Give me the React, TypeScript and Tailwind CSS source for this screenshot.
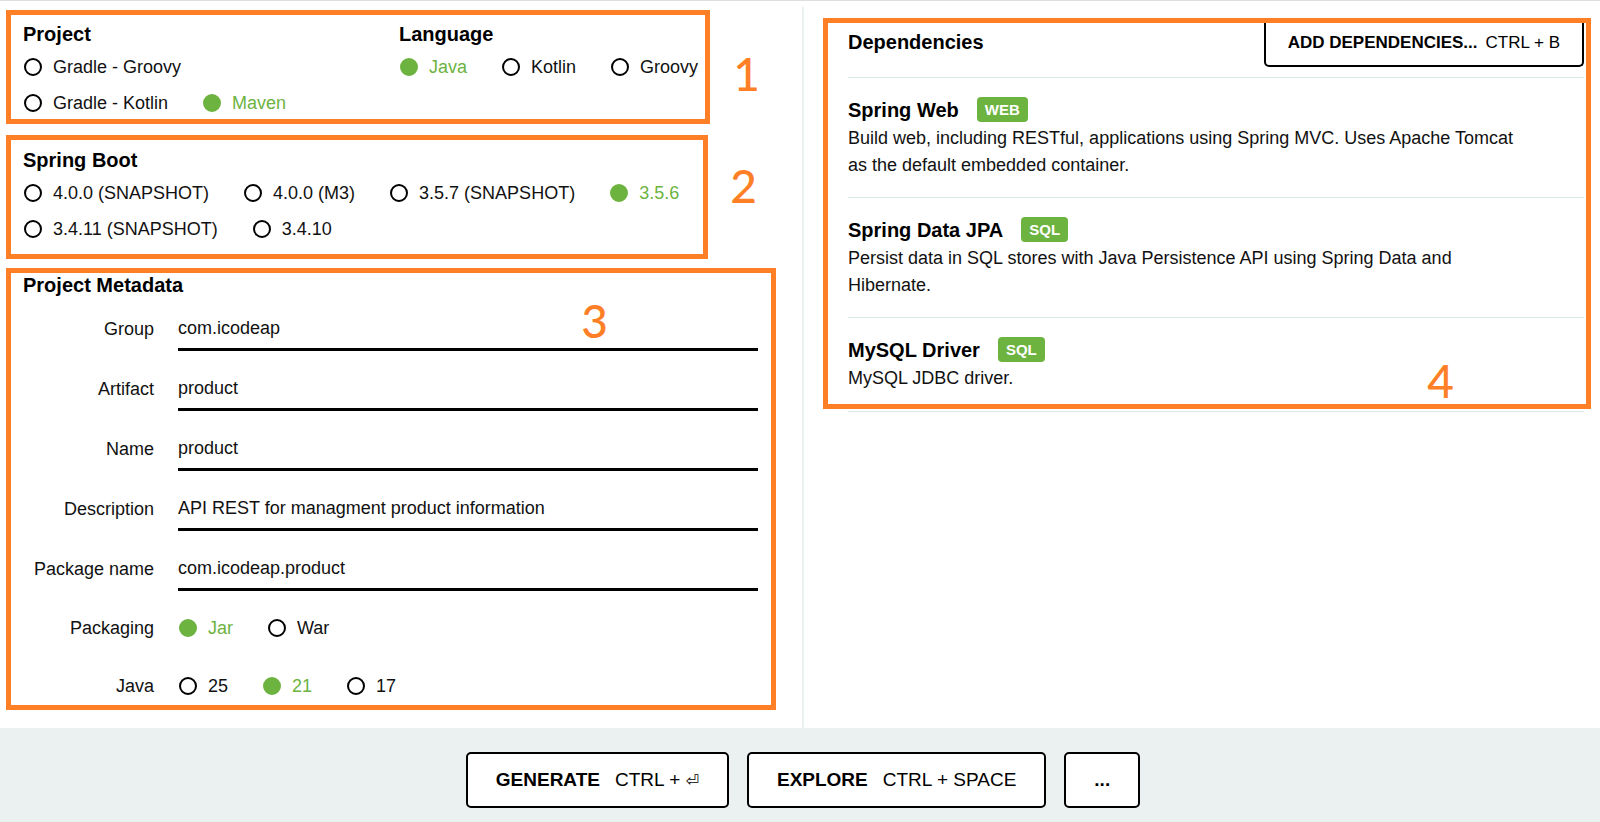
import { useId } from 'react';
import type { ReactNode } from 'react';

interface RadioGroupProps {
  name: string;
  label: string;
  options: string[];
  selected: string;
}

interface Dependency {
  name: string;
  tag: string;
  description: string;
}

const FIELDS = [
  { label: 'Group', value: 'com.icodeap' },
  { label: 'Artifact', value: 'product' },
  { label: 'Name', value: 'product' },
  { label: 'Description', value: 'API REST for managment product information' },
  { label: 'Package name', value: 'com.icodeap.product' },
];

const DEPENDENCIES: Dependency[] = [
  {
    name: 'Spring Web',
    tag: 'WEB',
    description:
      'Build web, including RESTful, applications using Spring MVC. Uses Apache Tomcat as the default embedded container.',
  },
  {
    name: 'Spring Data JPA',
    tag: 'SQL',
    description: 'Persist data in SQL stores with Java Persistence API using Spring Data and Hibernate.',
  },
  { name: 'MySQL Driver', tag: 'SQL', description: 'MySQL JDBC driver.' },
];

function RadioGroup({ name, label, options, selected }: RadioGroupProps) {
  return (
    <div role="radiogroup" aria-label={label} className="flex flex-wrap gap-x-[34px]">
      {options.map((option) => (
        <label
          key={option}
          className="flex h-9 items-center gap-[11px] pl-px whitespace-nowrap has-checked:text-[#6db33f]"
        >
          <input
            type="radio"
            name={name}
            defaultChecked={option === selected}
            className="size-[18px] shrink-0 appearance-none rounded-full border-2 border-black bg-white checked:border-[#6db33f] checked:bg-[#6db33f]"
          />
          {option}
        </label>
      ))}
    </div>
  );
}

function Heading({ children }: { children: ReactNode }) {
  return <h2 className="text-[20px] leading-[30px] font-bold text-black">{children}</h2>;
}

// Orange step number shown on top of a highlighted section
function StepNumber({ value, className }: { value: number; className: string }) {
  return (
    <span
      className={`absolute font-[Lato,sans-serif] text-[46px] leading-none font-medium text-[#ff7f27] ${className}`}
    >
      {value}
    </span>
  );
}

function TextField({ label, value }: { label: string; value: string }) {
  const id = useId();
  return (
    <div className="mb-[19px] flex items-center gap-6">
      <label htmlFor={id} className="w-[131px] shrink-0 pb-[2px] text-right">
        {label}
      </label>
      <input
        id={id}
        type="text"
        defaultValue={value}
        className="h-[41px] min-w-0 flex-1 border-b-3 border-black bg-transparent pb-px outline-none"
      />
    </div>
  );
}

function DependencyItem({ name, tag, description }: Dependency) {
  return (
    <li className="border-t border-[#d8e8e4] pt-[19px] pb-[18px]">
      <div className="flex h-[25px] items-center gap-[18px]">
        <h3 className="text-[20px] leading-6 font-bold text-black">{name}</h3>
        <span className="rounded bg-[#6db33f] px-2 text-[15px] leading-[25px] font-bold text-white">{tag}</span>
      </div>
      <p className="mt-[3px] max-w-[680px] leading-[27px]">{description}</p>
    </li>
  );
}

function ActionButton({ label, shortcut }: { label: string; shortcut?: ReactNode }) {
  return (
    <button
      type="button"
      className="flex h-14 items-center gap-[15px] rounded-[5px] border-2 border-black bg-white px-7 text-[19px] text-black"
    >
      <span className="font-bold">{label}</span>
      {shortcut && <span>{shortcut}</span>}
    </button>
  );
}

export default function App() {
  return (
    <div className="flex min-h-screen flex-col border-t border-[#dddddd] bg-white font-['Liberation_Sans',Arial,sans-serif] text-[18px] text-[#111111]">
      <main className="flex flex-1">
        <div className="mt-[6px] flex w-[804px] shrink flex-col border-r-2 border-[#ebf1f1] pt-[3px] pb-4 pl-[6px]">
          <section className="relative mr-[92px] flex h-[114px] border-5 border-[#ff7f27] pt-1 pl-3">
            <div className="w-[376px] shrink-0 pr-12">
              <Heading>Project</Heading>
              <RadioGroup
                name="project"
                label="Project"
                options={['Gradle - Groovy', 'Gradle - Kotlin', 'Maven']}
                selected="Maven"
              />
            </div>
            <div className="flex-1">
              <Heading>Language</Heading>
              <RadioGroup name="language" label="Language" options={['Java', 'Kotlin', 'Groovy']} selected="Java" />
            </div>
            <StepNumber value={1} className="top-9 -right-[55px]" />
          </section>

          <section className="relative mt-[11px] mr-[94px] h-[124px] border-5 border-[#ff7f27] pt-[5px] pl-3">
            <Heading>Spring Boot</Heading>
            <RadioGroup
              name="boot"
              label="Spring Boot"
              options={[
                '4.0.0 (SNAPSHOT)',
                '4.0.0 (M3)',
                '3.5.7 (SNAPSHOT)',
                '3.5.6',
                '3.4.11 (SNAPSHOT)',
                '3.4.10',
              ]}
              selected="3.5.6"
            />
            <StepNumber value={2} className="top-[23px] -right-[54px]" />
          </section>

          <section className="relative mt-[9px] mr-[26px] border-5 border-[#ff7f27] pr-[13px] pb-px pl-3">
            <div className="-mt-[3px] mb-[10px]">
              <Heading>Project Metadata</Heading>
            </div>
            {FIELDS.map((field) => (
              <TextField key={field.label} label={field.label} value={field.value} />
            ))}
            <div className="mb-[22px] flex items-center gap-6">
              <span className="w-[131px] text-right">Packaging</span>
              <RadioGroup name="packaging" label="Packaging" options={['Jar', 'War']} selected="Jar" />
            </div>
            <div className="flex items-center gap-6">
              <span className="w-[131px] text-right">Java</span>
              <RadioGroup name="java" label="Java" options={['25', '21', '17']} selected="21" />
            </div>
            <StepNumber value={3} className="top-[25px] right-[163px]" />
          </section>
        </div>

        <div className="min-w-0 flex-1 pt-[17px] pr-[9px] pl-[19px]">
          <section className="relative h-[391px] border-5 border-[#ff7f27] pr-[2px] pl-5">
            <div className="flex h-[54px] items-start justify-between overflow-hidden">
              <div className="pt-1">
                <Heading>Dependencies</Heading>
              </div>
              <button
                type="button"
                className="flex h-11 items-center gap-2 rounded-b-[5px] border-2 border-t-0 border-black bg-white px-[22px] pb-[2px] text-[17px] text-black"
              >
                <span className="font-bold">ADD DEPENDENCIES...</span>
                <span>CTRL + B</span>
              </button>
            </div>
            <ul>
              {DEPENDENCIES.map((dependency) => (
                <DependencyItem key={dependency.name} {...dependency} />
              ))}
            </ul>
            <StepNumber value={4} className="right-[132px] bottom-0" />
          </section>
          <hr className="mt-[2px] mr-[7px] ml-[25px] border-[#d8e8e4]" />
        </div>
      </main>

      <footer className="flex justify-center gap-[18px] bg-[#ebf1f1] pt-6 pb-[14px] pl-[6px]">
        <ActionButton
          label="GENERATE"
          shortcut={
            <>
              CTRL + <span className="font-['DejaVu_Sans',sans-serif] text-[16px]">⏎</span>
            </>
          }
        />
        <ActionButton label="EXPLORE" shortcut="CTRL + SPACE" />
        <ActionButton label="..." />
      </footer>
    </div>
  );
}
